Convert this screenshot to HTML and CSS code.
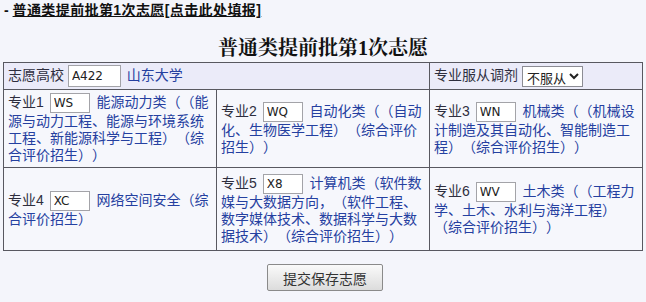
FILE: index.html
```html
<html>
  <head>
    <meta charset="utf-8"/>
    <link rel="stylesheet" href="styles.css">
  </head>
  <body>
    <p class="entry">- <a href="#">普通类提前批第1次志愿[点击此处填报]</a></p>

    <table class="wish-table">
      <caption>普通类提前批第1次志愿</caption>
      <colgroup>
        <col class="col">
        <col class="col">
        <col class="col">
      </colgroup>
      <tr class="school-row">
        <td colspan="2">志愿高校 <input class="code code--school" value="A422"> <span class="name">山东大学</span></td>
        <td>专业服从调剂 <select class="adjust"><option>不服从</option><option>服从</option></select></td>
      </tr>
      <tr class="major-row major-row--first">
        <td>专业1 <input class="code" value="WS"> <span class="name">能源动力类（（能源与动力工程、能源与环境系统工程、新能源科学与工程）（综合评价招生））</span></td>
        <td>专业2 <input class="code" value="WQ"> <span class="name">自动化类（（自动化、生物医学工程）（综合评价招生））</span></td>
        <td>专业3 <input class="code" value="WN"> <span class="name">机械类（（机械设计制造及其自动化、智能制造工程）（综合评价招生））</span></td>
      </tr>
      <tr class="major-row major-row--second">
        <td>专业4 <input class="code" value="XC"> <span class="name">网络空间安全（综合评价招生）</span></td>
        <td>专业5 <input class="code" value="X8"> <span class="name">计算机类（软件数媒与大数据方向，（软件工程、数字媒体技术、数据科学与大数据技术）（综合评价招生））</span></td>
        <td>专业6 <input class="code" value="WV"> <span class="name">土木类（（工程力学、土木、水利与海洋工程）（综合评价招生））</span></td>
      </tr>
    </table>

    <div class="actions">
      <button class="save-button">提交保存志愿</button>
    </div>
  </body>
</html>
```

FILE: styles.css
```css
body {
  margin: 0;
  padding: 1px 3px 0 3px;

  background-color: #f4f5fb;
  color: #2e2e3e;

  font-family: "Liberation Sans", "Noto Sans CJK SC", sans-serif;
  font-size: 14px;
}

.entry {
  margin: 0 0 0 1px;

  height: 19px;
  line-height: 19px;

  font-weight: bold;
  color: #111;
}

.entry a {
  color: #111;
  text-decoration: underline;
  letter-spacing: 0.4px;
}

.wish-table {
  width: 640px;

  table-layout: fixed;
  border-collapse: collapse;

  font-family: "Liberation Sans", "Noto Sans CJK SC", sans-serif;
  font-size: 14px;
  color: #2e2e3e;

  text-spacing-trim: space-all;
}

.wish-table caption {
  padding-top: 14px;

  height: 28px;
  line-height: 28px;

  font-family: "Liberation Serif", "Noto Serif CJK SC", "Noto Sans CJK SC", serif;
  font-size: 20px;
  font-weight: bold;
  color: #111;
}

.wish-table td {
  padding: 0 4px;

  border: 1px solid #585860;

  line-height: 17px;
  vertical-align: middle;
}

.school-row td {
  height: 27px;

  background-color: #ebebf9;
}

.major-row td { background-color: #f6f7fc; }

.major-row--first td { height: 78px; }

.major-row--second td { height: 83px; }

.name { color: #2540a0; }

.code {
  box-sizing: border-box;
  width: 40px;
  height: 20px;
  margin: 0 3px 0 2px;
  padding: 0 3px;

  border: 1px solid #a3a3a8;
  background-color: #fff;

  font-family: "DejaVu Sans", sans-serif;
  font-size: 12px;
  color: #222;

  vertical-align: middle;
}

.code--school {
  width: 53px;
  height: 22px;
  margin: 0 2px 0 0;
}

.adjust {
  box-sizing: border-box;
  width: 61px;
  height: 21px;
  margin: 0;

  border: 1px solid #8c8c94;
  background-color: #fff;

  font-family: "Noto Sans CJK SC", sans-serif;
  font-size: 13px;
  color: #222;

  vertical-align: middle;
}

.actions {
  padding-top: 13px;

  text-align: center;
}

.save-button {
  width: 116px;
  height: 27px;
  margin-left: 4px;

  border: 1px solid #8a8a8a;
  border-radius: 2px;
  background: linear-gradient(#fafafa, #dcdcdc);

  font-family: "Noto Sans CJK SC", sans-serif;
  font-size: 14px;
  color: #333;
}
```
